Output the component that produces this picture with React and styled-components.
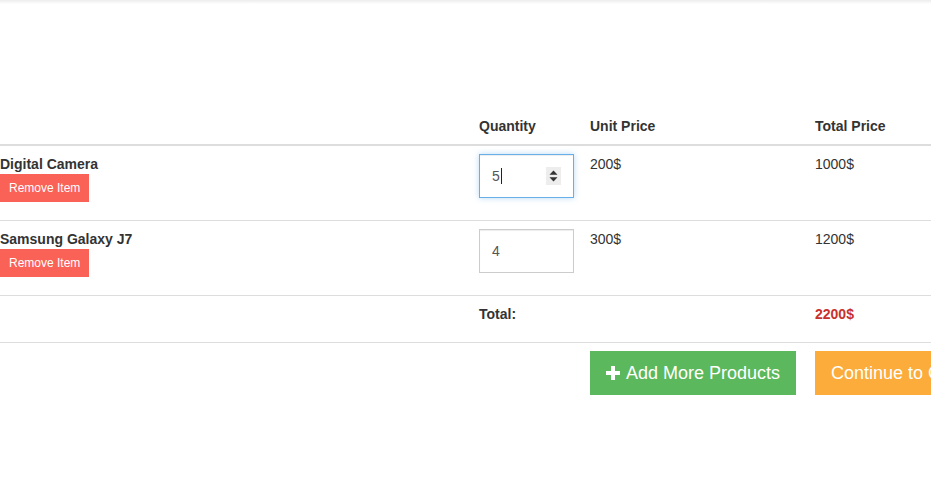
import React from "react";
import styled, { createGlobalStyle } from "styled-components";

const GlobalStyle = createGlobalStyle`
  html, body {
    margin: 0;
    padding: 0;
    background: #fff;
    overflow: hidden;
  }
  body {
    font-family: "Liberation Sans", Arial, Helvetica, sans-serif;
    font-size: 14px;
    line-height: 20px;
    color: #333;
  }
  * {
    box-sizing: border-box;
  }
`;

const TopShade = styled.div`
  height: 4px;
  background: linear-gradient(#ececec, #fff);
`;

const Page = styled.div`
  padding-top: 104px;
  width: 1150px;
`;

const Row = styled.div`
  display: grid;
  grid-template-columns: 471px 111px 225px 1fr;
  height: ${({ $h }) => ($h ? `${$h}px` : "auto")};
  border-top: ${({ $line }) => ($line ? "1px solid #ddd" : "none")};
  border-bottom: ${({ $thick }) => ($thick ? "2px solid #ddd" : "none")};
`;

const Cell = styled.div`
  padding: 8px;
  padding-left: ${({ $first }) => ($first ? "0" : "8px")};
  font-weight: ${({ $bold }) => ($bold ? "bold" : "normal")};
  color: ${({ $color }) => $color || "#333"};
`;

const ProductName = styled.div`
  font-weight: bold;
`;

const RemoveButton = styled.button`
  display: block;
  height: 28px;
  padding: 0 9px;
  border: none;
  border-radius: 0;
  background: #fa6157;
  color: #fff;
  font-family: inherit;
  font-size: 12px;
  line-height: 28px;
  cursor: pointer;
`;

const QtyBox = styled.div`
  position: relative;
  width: 95px;
  height: 44px;
  padding: 0 12px;
  display: flex;
  align-items: center;
  color: #555;
  background: #fff;
  border: 1px solid ${({ $focus }) => ($focus ? "#66afe9" : "#ccc")};
  box-shadow: ${({ $focus }) =>
    $focus
      ? "inset 0 1px 1px rgba(0,0,0,.075), 0 0 6px rgba(102,175,233,.45)"
      : "inset 0 1px 1px rgba(0,0,0,.075)"};
`;

const Caret = styled.span`
  display: inline-block;
  width: 1px;
  height: 16px;
  margin-left: 1px;
  background: #222;
`;

const Spinner = styled.span`
  position: absolute;
  right: 12px;
  top: 12px;
  width: 15px;
  height: 18px;
  background: #ededed;
  display: flex;
  align-items: center;
  justify-content: center;
`;

const BigButton = styled.button`
  display: inline-flex;
  align-items: center;
  gap: 6px;
  height: 44px;
  padding: 0 16px;
  border: none;
  border-radius: 0;
  background: ${({ $bg }) => $bg};
  color: #fff;
  font-family: inherit;
  font-size: 18px;
  white-space: nowrap;
  cursor: pointer;
`;

const Spin = () => (
  <svg width="9" height="12" viewBox="0 0 9 12">
    <path d="M4.5 0.5 L8.5 4.8 L0.5 4.8 Z" fill="#333" />
    <path d="M4.5 11.5 L8.5 7.2 L0.5 7.2 Z" fill="#333" />
  </svg>
);

const Plus = () => (
  <svg width="14" height="14" viewBox="0 0 14 14">
    <path d="M5 0h4v5h5v4H9v5H5V9H0V5h5z" fill="#fff" />
  </svg>
);

const items = [
  { name: "Digital Camera", qty: 5, unit: 200, focus: true },
  { name: "Samsung Galaxy J7", qty: 4, unit: 300 },
];

export default function App() {
  const total = items.reduce((s, i) => s + i.qty * i.unit, 0);
  return (
    <>
      <GlobalStyle />
      <TopShade />
      <Page>
        <Row $h={38} $thick>
          <Cell $first $bold />
          <Cell $bold>Quantity</Cell>
          <Cell $bold>Unit Price</Cell>
          <Cell $bold>Total Price</Cell>
        </Row>
        {items.map((item, i) => (
          <Row key={item.name} $h={i === 0 ? 74 : 75} $line={i > 0}>
            <Cell $first>
              <ProductName>{item.name}</ProductName>
              <RemoveButton>Remove Item</RemoveButton>
            </Cell>
            <Cell>
              <QtyBox $focus={item.focus}>
                {item.qty}
                {item.focus && <Caret />}
                {item.focus && (
                  <Spinner>
                    <Spin />
                  </Spinner>
                )}
              </QtyBox>
            </Cell>
            <Cell>{item.unit}$</Cell>
            <Cell>{item.qty * item.unit}$</Cell>
          </Row>
        ))}
        <Row $h={47} $line>
          <Cell $first />
          <Cell $bold>Total:</Cell>
          <Cell />
          <Cell $bold $color="#c9302c">
            {total}$
          </Cell>
        </Row>
        <Row $line>
          <Cell $first />
          <Cell />
          <Cell>
            <BigButton $bg="#5cb85c">
              <Plus />
              Add More Products
            </BigButton>
          </Cell>
          <Cell>
            <BigButton $bg="#fcac3a">Continue to Checkout</BigButton>
          </Cell>
        </Row>
      </Page>
    </>
  );
}
